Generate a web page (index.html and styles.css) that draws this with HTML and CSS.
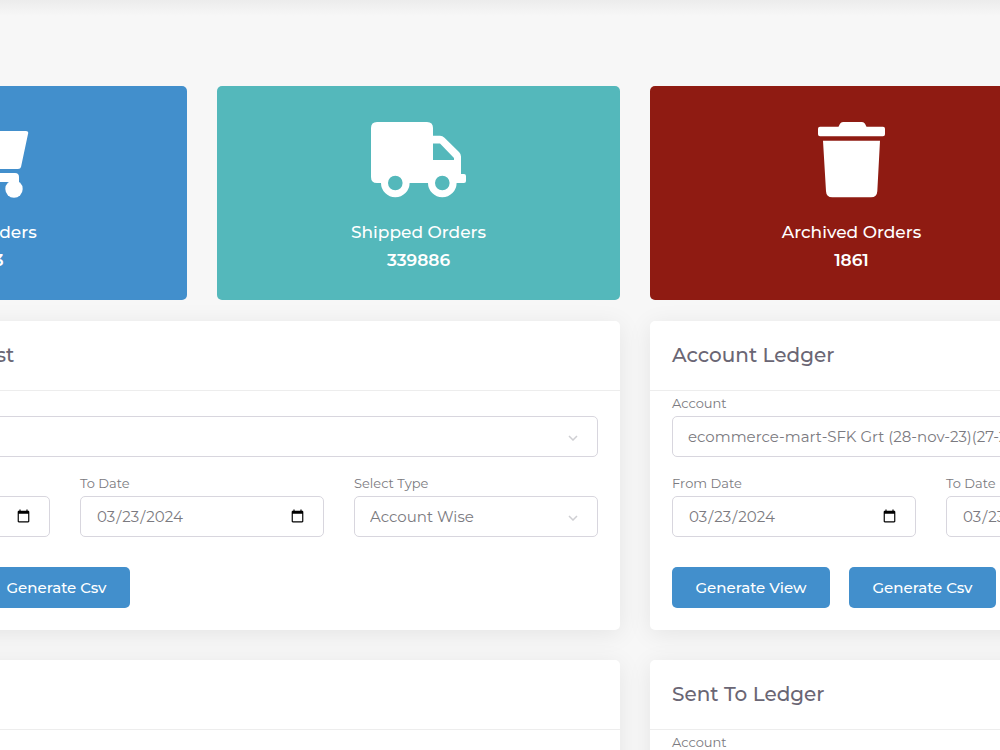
FILE: index.html
```html
<!DOCTYPE html>
<html lang="en">
<head>
  <meta charset="UTF-8">
  <meta name="viewport" content="width=device-width, initial-scale=1.0">
  <title>Dashboard</title>
  <link rel="stylesheet" href="styles.css">
</head>
<body>
  <main class="dashboard">
    <section class="tile tile-blue">
      <svg class="tile-icon" width="86" height="76" viewBox="0 0 86 76" fill="currentColor" aria-hidden="true">
        <path d="M0 3h14q2 0 3 2l1 4h65q3 0 2 3l-7 33q-.5 2-3 2H26l1 4h45q4 0 4 4v5H23L11 10H0z"/>
        <circle cx="31" cy="67" r="8.700"/>
        <circle cx="71" cy="67" r="8.700"/>
        <path class="cut" d="M24 47h58v4H24z"/>
      </svg>
      <div class="tile-label">New Orders</div>
      <div class="tile-count">2153</div>
    </section>
    <section class="tile tile-teal">
      <svg class="tile-icon" width="95" height="76" viewBox="0 0 95 76" fill="currentColor" fill-rule="evenodd" aria-hidden="true">
        <path d="M6 0h50q6 0 6 6v7.700h7q2.500 0 4.500 2L88 30q2 2 2 4.500V52h3q2 0 2 2v5q0 2-2 2h-7.400a14.300 14.300 0 0 1-28.600 0H38.600a14.300 14.300 0 0 1-28.600 0H6q-6 0-6-6V6q0-6 6-6zM62 21.500V38h21v-2L69 21.500zM24.300 53.700a7.300 7.300 0 1 0 0 14.600 7.300 7.300 0 1 0 0-14.600zM71.300 53.700a7.300 7.300 0 1 0 0 14.600 7.300 7.300 0 1 0 0-14.600z"/>
      </svg>
      <div class="tile-label">Shipped Orders</div>
      <div class="tile-count">339886</div>
    </section>
    <section class="tile tile-red">
      <svg class="tile-icon" width="68" height="76" viewBox="0 0 68 76" fill="currentColor" aria-hidden="true">
        <path d="M2 4.700h18.500l1.500-3Q23 0 25 0h19q2 0 3 1.700l1.500 3H65q2 0 2 2v5.600q0 2-2 2H2q-2 0-2-2V6.700q0-2 2-2z"/>
        <path d="M5 18.700h57l-2.700 50.600q-.3 6-6.300 6H14.300q-6 0-6.300-6z"/>
      </svg>
      <div class="tile-label">Archived Orders</div>
      <div class="tile-count">1861</div>
    </section>

    <section class="panel">
      <h2 class="panel-title">Generate Orders List</h2>
      <form class="panel-body">
        <div class="field field-full">
          <label for="list-account">Account</label>
          <div class="select-box">
            <select id="list-account"><option>All</option></select>
            <svg class="chevron" width="10" height="6" viewBox="0 0 10 6" aria-hidden="true"><path d="M1 1l4 4 4-4"/></svg>
          </div>
        </div>
        <div class="field">
          <label for="list-from">From Date</label>
          <input type="date" id="list-from" value="2024-03-23">
        </div>
        <div class="field">
          <label for="list-to">To Date</label>
          <input type="date" id="list-to" value="2024-03-23">
        </div>
        <div class="field">
          <label for="list-type">Select Type</label>
          <div class="select-box">
            <select id="list-type"><option>Account Wise</option></select>
            <svg class="chevron" width="10" height="6" viewBox="0 0 10 6" aria-hidden="true"><path d="M1 1l4 4 4-4"/></svg>
          </div>
        </div>
        <div class="actions">
          <button type="button" class="btn btn-view">Generate View</button>
          <button type="button" class="btn">Generate Csv</button>
        </div>
      </form>
    </section>

    <section class="panel">
      <h2 class="panel-title">Account Ledger</h2>
      <form class="panel-body">
        <div class="field field-full">
          <label for="ledger-account">Account</label>
          <div class="select-box">
            <select id="ledger-account"><option>ecommerce-mart-SFK Grt (28-nov-23)(27-223)</option></select>
            <svg class="chevron" width="10" height="6" viewBox="0 0 10 6" aria-hidden="true"><path d="M1 1l4 4 4-4"/></svg>
          </div>
        </div>
        <div class="field">
          <label for="ledger-from">From Date</label>
          <input type="date" id="ledger-from" value="2024-03-23">
        </div>
        <div class="field">
          <label for="ledger-to">To Date</label>
          <input type="date" id="ledger-to" value="2024-03-23">
        </div>
        <div class="actions">
          <button type="button" class="btn btn-view">Generate View</button>
          <button type="button" class="btn">Generate Csv</button>
        </div>
      </form>
    </section>

    <section class="panel">
      <h2 class="panel-title">Orders</h2>
      <form class="panel-body">
      </form>
    </section>

    <section class="panel">
      <h2 class="panel-title">Sent To Ledger</h2>
      <form class="panel-body">
        <div class="field field-full">
          <label for="sent-account">Account</label>
          <div class="select-box">
            <select id="sent-account"><option>All</option></select>
          </div>
        </div>
      </form>
    </section>
  </main>
</body>
</html>
```
FILE: styles.css
```css
* {
  box-sizing: border-box;
}
body {
  margin: 0;
  height: 100vh;
  overflow: hidden;
  font-family: Montserrat, Inter, sans-serif;
  font-size: 15px;
  color: #7b7a80;
  background: linear-gradient(#ececec, #f7f7f7 16px);
}

/* the dashboard is wider than the window on both sides */
.dashboard {
  display: grid;
  grid-template-columns: repeat(4, 1fr);
  column-gap: 30px;
  margin: 0 -486px 0 -216px;
  padding-top: 86px;
}

.tile {
  display: flex;
  flex-direction: column;
  align-items: center;
  height: 214px;
  margin-bottom: 21px;
  padding-top: 36px;
  border-radius: 5px;
  color: #fff;
}
.tile-blue {
  background: #428fcc;
}
.tile-teal {
  background: #54b8bb;
}
.tile-red {
  grid-column: span 2;
  width: calc(50% - 15px);
  background: #8f1b12;
}
.tile-icon {
  margin-bottom: 20px;
}
.cut {
  fill: #428fcc;
}
.tile-label,
.tile-count {
  font-size: 17px;
  line-height: 28px;
  font-weight: 500;
}
.tile-count {
  font-weight: 600;
}

.panel {
  grid-column: span 2;
  margin-bottom: 30px;
  border-radius: 5px;
  background: #fff;
  box-shadow: 0 4px 24px rgba(0, 0, 0, 0.08);
}
.panel-title {
  margin: 0;
  padding: 0 22px;
  border-bottom: 1px solid #ededed;
  font-size: 20px;
  line-height: 69px;
  font-weight: 500;
  color: #6a6674;
}
.panel-body {
  display: grid;
  grid-template-columns: repeat(3, 1fr);
  gap: 16px 30px;
  padding: 2px 22px 22px;
}
.field-full,
.actions {
  grid-column: 1 / -1;
}
.field label {
  display: block;
  margin-bottom: 3px;
  font-size: 13px;
  line-height: 20px;
}
.field input,
.field select {
  display: block;
  width: 100%;
  height: 41px;
  padding: 0 16px 0 15px;
  border: 1px solid #d8d6de;
  border-radius: 5px;
  background: #fff;
  color: inherit;
  font-family: inherit;
  font-size: 15px;
}
.field select {
  appearance: none;
}
.select-box {
  position: relative;
}
.chevron {
  position: absolute;
  right: 20px;
  top: 19px;
  fill: none;
  stroke: #cfcfd3;
  stroke-width: 1.5;
  pointer-events: none;
}

.actions {
  display: flex;
  gap: 19px;
  margin-top: 14px;
}
.btn {
  width: 147px;
  height: 41px;
  padding: 0;
  border: none;
  border-radius: 5px;
  background: #428fcc;
  color: #fff;
  font-family: inherit;
  font-size: 15px;
  font-weight: 500;
  cursor: pointer;
}
.btn-view {
  width: 158px;
}
```
